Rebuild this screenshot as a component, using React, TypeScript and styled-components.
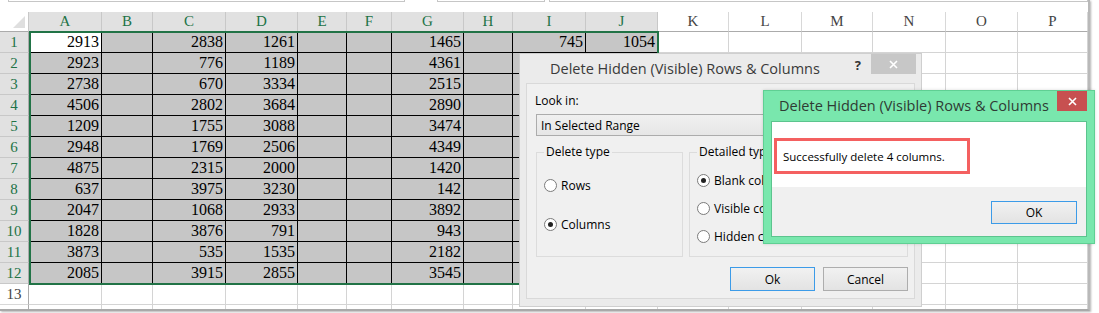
import React from "react";
import styled, { createGlobalStyle } from "styled-components";

const GlobalStyle = createGlobalStyle`
  html, body {
    margin: 0;
    padding: 0;
    background: #ffffff;
  }
  * {
    box-sizing: border-box;
  }
`;

const GREEN = "#217346";
const UI_FONT = `"Open Sans", "Noto Sans", sans-serif`;
const SHEET_FONT = `"Liberation Serif", "DejaVu Serif", serif`;

const columns = [
  { l: "A", w: 73 },
  { l: "B", w: 51 },
  { l: "C", w: 73 },
  { l: "D", w: 72 },
  { l: "E", w: 49 },
  { l: "F", w: 45 },
  { l: "G", w: 72 },
  { l: "H", w: 49 },
  { l: "I", w: 73 },
  { l: "J", w: 72 },
  { l: "K", w: 71 },
  { l: "L", w: 73 },
  { l: "M", w: 71 },
  { l: "N", w: 73 },
  { l: "O", w: 72 },
  { l: "P", w: 70 },
];

const data: Record<string, (number | null)[]> = {
  A: [2913, 2923, 2738, 4506, 1209, 2948, 4875, 637, 2047, 1828, 3873, 2085],
  C: [2838, 776, 670, 2802, 1755, 1769, 2315, 3975, 1068, 3876, 535, 3915],
  D: [1261, 1189, 3334, 3684, 3088, 2506, 2000, 3230, 2933, 791, 1535, 2855],
  G: [1465, 4361, 2515, 2890, 3474, 4349, 1420, 142, 3892, 943, 2182, 3545],
  I: [745],
  J: [1054],
};

const SELECTED_COLS = 10;
const SELECTED_ROWS = 12;
// row 14 only peeks out under the bottom edge, so it gets no label
const LABELLED_ROWS = 13;
const TOTAL_ROWS = 14;

/* ---------- page & sheet ---------- */

const Page = styled.div`
  position: relative;
  width: 1099px;
  height: 313px;
  overflow: hidden;
  background: #fff;
`;

const Frame = styled.div`
  width: 1090px;
  height: 311px;
  border-right: 2px solid #b9b9b9;
  border-bottom: 2px solid #a9a9a9;
  box-shadow: 1px 1px 2px rgba(0, 0, 0, 0.3);
  overflow: hidden;
  background: #fff;
`;

const TopStrip = styled.div`
  display: flex;
  align-items: flex-start;
  height: 12px;
`;

const StripBox = styled.div<{ $left: number; $width?: number }>`
  margin-left: ${(p) => p.$left}px;
  ${(p) => (p.$width ? `width: ${p.$width}px;` : "flex: 1;")}
  height: 2px;
  border: 1px solid #c6c6c6;
  border-top: none;
`;

const Grid = styled.div`
  display: grid;
  grid-template-columns: 29px ${columns.map((c) => `${c.w}px`).join(" ")};
  grid-template-rows: 20px repeat(${TOTAL_ROWS}, 21px);
`;

const Corner = styled.div`
  position: relative;
  background: #fff;
  border-right: 1px solid #c8c8c8;
  border-bottom: 1px solid #ababab;

  &::after {
    content: "";
    position: absolute;
    right: 3px;
    bottom: 3px;
    width: 0;
    height: 0;
    border-style: solid;
    border-width: 0 0 12px 12px;
    border-color: transparent transparent #dfdfdf transparent;
  }
`;

const ColHeader = styled.div<{ $sel: boolean }>`
  display: flex;
  align-items: center;
  justify-content: center;
  background: ${(p) => (p.$sel ? "#e1e1e1" : "#ffffff")};
  color: ${(p) => (p.$sel ? GREEN : "#444444")};
  border-right: 1px solid ${(p) => (p.$sel ? "#c8c8c8" : "#d8d8d8")};
  border-bottom: 1px solid #ababab;
  font: 15px ${SHEET_FONT};
`;

const RowHeader = styled.div<{ $sel: boolean }>`
  display: flex;
  align-items: center;
  justify-content: center;
  background: ${(p) => (p.$sel ? "#e1e1e1" : "#ffffff")};
  color: ${(p) => (p.$sel ? GREEN : "#444444")};
  border-right: 1px solid #ababab;
  border-bottom: 1px solid ${(p) => (p.$sel ? "#c8c8c8" : "#d8d8d8")};
  font: 15px ${SHEET_FONT};
`;

const Cell = styled.div<{ $sel: boolean; $active: boolean }>`
  display: flex;
  align-items: center;
  justify-content: flex-end;
  padding-right: 2px;
  background: ${(p) => (p.$active ? "#ffffff" : p.$sel ? "#c6c6c6" : "#ffffff")};
  border-right: 1px solid ${(p) => (p.$sel ? "#000000" : "#d4d4d4")};
  border-bottom: 1px solid ${(p) => (p.$sel ? "#000000" : "#d4d4d4")};
  font: 16px ${SHEET_FONT};
  color: #000;
`;

const Selection = styled.div`
  position: absolute;
  left: 29px;
  top: 31px;
  width: 630px;
  height: 254px;
  border: 2px solid ${GREEN};
  pointer-events: none;
`;

/* ---------- shared dialog parts ---------- */

const CloseButton = styled.div<{ $color: string; $w: number }>`
  display: flex;
  align-items: center;
  justify-content: center;
  width: ${(p) => p.$w}px;
  height: 20px;
  background: ${(p) => p.$color};
`;

const CloseIcon = () => (
  <svg width="9" height="9" viewBox="0 0 9 9">
    <path d="M1 1 L8 8 M8 1 L1 8" stroke="#fff" strokeWidth="1.6" />
  </svg>
);

const Button = styled.div<{ $primary?: boolean; $w: number; $h: number }>`
  display: flex;
  align-items: center;
  justify-content: center;
  width: ${(p) => p.$w}px;
  height: ${(p) => p.$h}px;
  border: 1px solid ${(p) => (p.$primary ? "#3c9be8" : "#adadad")};
  background: linear-gradient(#f1f1f1, #e3e3e3);
  font: 12px ${UI_FONT};
  color: #000;
`;

/* ---------- main dialog ---------- */

const MainDialog = styled.div`
  position: absolute;
  left: 519px;
  top: 53px;
  width: 403px;
  height: 254px;
  display: flex;
  flex-direction: column;
  background: #ebebeb;
  border: 1px solid #cfcfcf;
`;

const MainTitleBar = styled.div`
  display: flex;
  align-items: flex-start;
  height: 29px;
  padding-left: 30px;
  padding-right: 5px;
`;

const Title = styled.div<{ $color: string }>`
  flex: 1;
  padding-top: 5px;
  white-space: nowrap;
  font: 14.5px ${UI_FONT};
  color: ${(p) => p.$color};
`;

const Help = styled.div`
  margin-top: 2px;
  margin-right: 10px;
  font: bold 13px ${UI_FONT};
  color: #333;
`;

const MainPanel = styled.div`
  flex: 1;
  margin: 0 6px 7px 6px;
  padding: 0 6px 0 8px;
  background: #f0f0f0;
  border: 1px solid #d9d9d9;
  display: flex;
  flex-direction: column;
`;

const Label = styled.div`
  margin-top: 8px;
  height: 16px;
  line-height: 16px;
  font: 12px ${UI_FONT};
  color: #000;
`;

const SelectBox = styled.div`
  margin-top: 6px;
  margin-left: 1px;
  height: 22px;
  padding-left: 4px;
  display: flex;
  align-items: center;
  border: 1px solid #acacac;
  background: linear-gradient(#f0f0f0, #e6e6e6);
  font: 12px ${UI_FONT};
  color: #000;
`;

const GroupRow = styled.div`
  display: flex;
  gap: 6px;
  margin-top: 16px;
  margin-left: 1px;
`;

const Group = styled.div<{ $w: number; $pt: number; $gap: number }>`
  position: relative;
  width: ${(p) => p.$w}px;
  height: 105px;
  border: 1px solid #dcdcdc;
  padding: ${(p) => p.$pt}px 0 0 7px;
  display: flex;
  flex-direction: column;
  gap: ${(p) => p.$gap}px;
`;

const Legend = styled.span`
  position: absolute;
  top: -9px;
  left: 7px;
  padding: 0 2px;
  background: #f0f0f0;
  font: 12px ${UI_FONT};
  line-height: 16px;
  color: #000;
  white-space: nowrap;
`;

const RadioRow = styled.div`
  display: flex;
  align-items: center;
  gap: 4px;
  height: 14px;
  white-space: nowrap;
  font: 12px ${UI_FONT};
  color: #000;
`;

const RadioDot = styled.span<{ $on?: boolean }>`
  display: inline-flex;
  align-items: center;
  justify-content: center;
  width: 13px;
  height: 13px;
  border-radius: 50%;
  border: 1px solid #7b7b7b;
  background: #fff;

  &::after {
    content: "";
    width: 5px;
    height: 5px;
    border-radius: 50%;
    background: ${(p) => (p.$on ? "#222" : "transparent")};
  }
`;

const ButtonRow = styled.div`
  display: flex;
  justify-content: flex-end;
  gap: 8px;
  margin-top: 10px;
`;

/* ---------- result dialog ---------- */

const ResultDialog = styled.div`
  position: absolute;
  left: 763px;
  top: 90px;
  width: 332px;
  height: 154px;
  display: flex;
  flex-direction: column;
  background: #79e7ad;
  border: 1px solid #5fcf93;
  box-shadow: 0 0 3px rgba(0, 0, 0, 0.15);
`;

const ResultTitleBar = styled.div`
  display: flex;
  align-items: flex-start;
  height: 30px;
  padding-left: 15px;
  padding-right: 7px;
`;

const ResultBody = styled.div`
  flex: 1;
  margin: 0 7px 6px 7px;
  display: flex;
  flex-direction: column;
  border: 1px solid #5cc48e;
  background: #fff;
`;

const MessageArea = styled.div`
  height: 65px;
  padding: 16px 0 0 2px;
`;

const Highlight = styled.div`
  width: 196px;
  height: 36px;
  display: flex;
  align-items: center;
  padding-left: 6px;
  border: 3px solid #f46060;
  white-space: nowrap;
  font: 11.5px ${UI_FONT};
  color: #000;
`;

const Footer = styled.div`
  flex: 1;
  background: #f0f0f0;
  display: flex;
  justify-content: flex-end;
  align-items: flex-start;
  padding: 14px 9px 0 0;
`;

export default function App() {
  const cells: React.ReactNode[] = [];
  cells.push(<Corner key="corner" />);
  columns.forEach((c, ci) => {
    cells.push(
      <ColHeader key={`h-${c.l}`} $sel={ci < SELECTED_COLS}>
        {c.l}
      </ColHeader>
    );
  });
  for (let r = 1; r <= TOTAL_ROWS; r++) {
    const rowSel = r <= SELECTED_ROWS;
    cells.push(
      <RowHeader key={`r-${r}`} $sel={rowSel}>
        {r <= LABELLED_ROWS ? r : null}
      </RowHeader>
    );
    columns.forEach((c, ci) => {
      const sel = rowSel && ci < SELECTED_COLS;
      const value = rowSel ? data[c.l]?.[r - 1] ?? null : null;
      cells.push(
        <Cell key={`${c.l}${r}`} $sel={sel} $active={r === 1 && ci === 0}>
          {value}
        </Cell>
      );
    });
  }

  return (
    <>
      <GlobalStyle />
      <Page>
        <Frame>
          <TopStrip>
            <StripBox $left={8} $width={397} />
            <StripBox $left={32} $width={108} />
            <StripBox $left={4} />
          </TopStrip>
          <Grid>{cells}</Grid>
        </Frame>

        <Selection />

        <MainDialog>
          <MainTitleBar>
            <Title $color="#3a3a3a">Delete Hidden (Visible) Rows &amp; Columns</Title>
            <Help>?</Help>
            <CloseButton $color="#c7c7c7" $w={45}>
              <CloseIcon />
            </CloseButton>
          </MainTitleBar>
          <MainPanel>
            <Label>Look in:</Label>
            <SelectBox>In Selected Range</SelectBox>
            <GroupRow>
              <Group $w={147} $pt={25} $gap={25}>
                <Legend>Delete type</Legend>
                <RadioRow>
                  <RadioDot />
                  Rows
                </RadioRow>
                <RadioRow>
                  <RadioDot $on />
                  Columns
                </RadioRow>
              </Group>
              <Group $w={219} $pt={20} $gap={14}>
                <Legend>Detailed type</Legend>
                <RadioRow>
                  <RadioDot $on />
                  Blank columns
                </RadioRow>
                <RadioRow>
                  <RadioDot />
                  Visible columns
                </RadioRow>
                <RadioRow>
                  <RadioDot />
                  Hidden columns
                </RadioRow>
              </Group>
            </GroupRow>
            <ButtonRow>
              <Button $primary $w={85} $h={24}>
                Ok
              </Button>
              <Button $w={85} $h={24}>
                Cancel
              </Button>
            </ButtonRow>
          </MainPanel>
        </MainDialog>

        <ResultDialog>
          <ResultTitleBar>
            <Title $color="#2f3b34">Delete Hidden (Visible) Rows &amp; Columns</Title>
            <CloseButton $color="#c75050" $w={30}>
              <CloseIcon />
            </CloseButton>
          </ResultTitleBar>
          <ResultBody>
            <MessageArea>
              <Highlight>Successfully delete 4 columns.</Highlight>
            </MessageArea>
            <Footer>
              <Button $primary $w={86} $h={23}>
                OK
              </Button>
            </Footer>
          </ResultBody>
        </ResultDialog>
      </Page>
    </>
  );
}
